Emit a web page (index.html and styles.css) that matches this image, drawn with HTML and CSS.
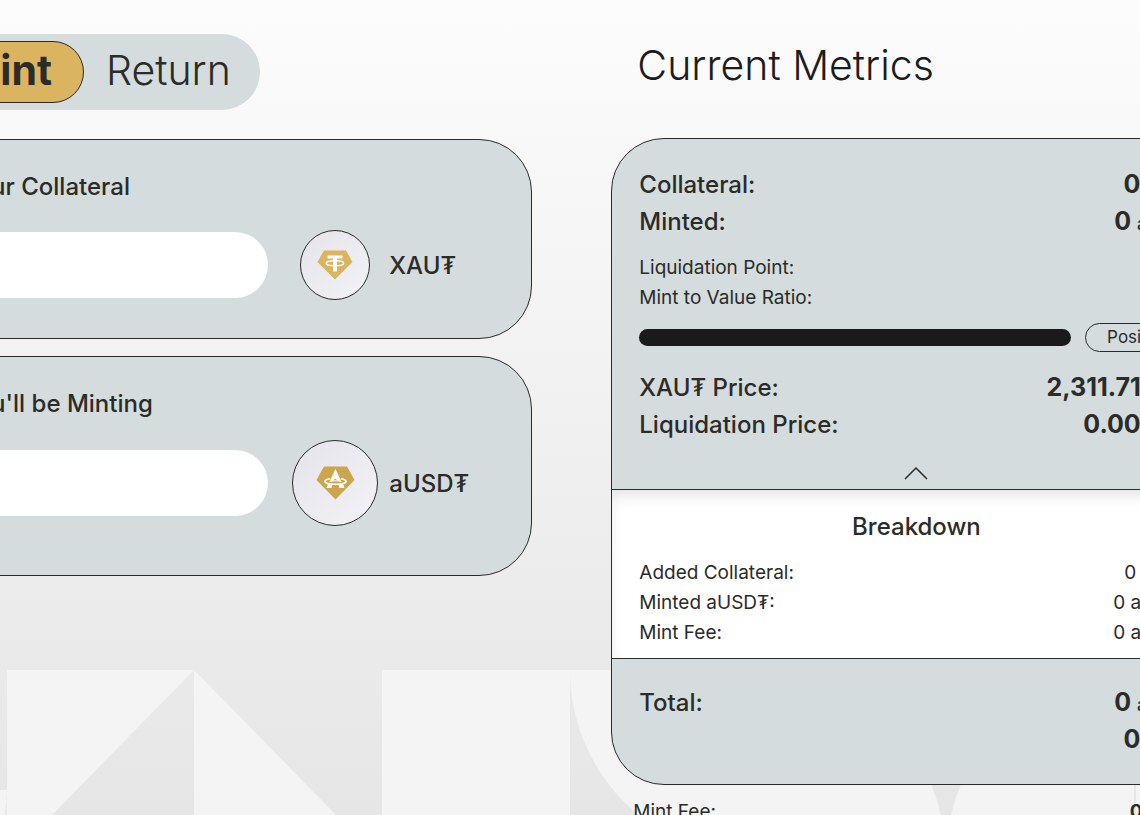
FILE: index.html
```html
<!DOCTYPE html>
<html lang="en">
<head>
<meta charset="utf-8">
<meta name="viewport" content="width=device-width, initial-scale=1">
<title>Mint</title>
<link rel="stylesheet" href="styles.css">
</head>
<body>
<div class="page">
  <svg class="pattern" viewBox="0 0 1140 145" aria-hidden="true">
    <path d="M0 120H7Q7 140 0 164Z"/>
    <path d="M7 0H194L52 145H7Z"/>
    <path d="M194 0L336 145H194Z"/>
    <path d="M382 0H570V145H382Z"/>
    <path d="M570 0H758V188A188 188 0 0 1 570 0Z"/>
    <path d="M758 0A188 188 0 0 1 946 188H758Z"/>
    <path d="M946 188A188 188 0 0 1 1134 0V188Z"/>
    <path d="M1136 0H1140V145H1136Z"/>
  </svg>
  <main class="layout">
    <section class="column">
      <header class="head">
        <div class="toggle">
          <button class="toggle-item active" type="button">Mint</button>
          <button class="toggle-item" type="button">Return</button>
        </div>
      </header>
      <div class="card">
        <label class="title" for="collateral">Your Collateral</label>
        <div class="entry">
          <input class="amount" id="collateral" type="text">
          <span class="slot"><span class="coin">
            <svg width="36" height="30" viewBox="0 0 36 30" aria-hidden="true">
              <path fill="#dab45e" d="M7 .5H29L35.500 12L18 29.500L.5 12Z"/>
              <path fill="#fff" d="M10.500 5.500H25.500V8.500H20V21.500H16V8.500H10.500Z"/>
              <ellipse cx="18" cy="13.200" rx="8.800" ry="2.600" fill="none" stroke="#fff" stroke-width="1.300"/>
            </svg>
          </span></span>
          <span class="token">XAU₮</span>
        </div>
      </div>
      <div class="card minting">
        <label class="title" for="minting">You'll be Minting</label>
        <div class="entry">
          <input class="amount" id="minting" type="text">
          <span class="slot"><span class="coin large">
            <svg width="39" height="34" viewBox="0 0 39 34" aria-hidden="true">
              <path fill="#cca54d" d="M8 .5H31L38.500 14L19.500 33.500L.5 14Z"/>
              <path fill="#fff" d="M19.500 3L25 14.500L22 15L19.500 12.500L17 15L14 14.500Z"/>
              <path fill="none" stroke="#fff" stroke-width="1.600" d="M14 12.800C6 14 7 18.300 19.500 18.300S33 14 25 12.800"/>
              <path fill="none" stroke="#fff" stroke-width="1.200" d="M13.500 15.500Q19.500 14 25.500 15.500"/>
              <path fill="#fff" d="M12 18L16.500 18.500L15.500 22H10.500ZM27 18L22.500 18.500L23.500 22H28.500Z"/>
            </svg>
          </span></span>
          <span class="token">aUSD₮</span>
        </div>
      </div>
    </section>
    <section class="column">
      <header class="head"><h1 class="heading">Current Metrics</h1></header>
      <div class="metrics">
        <div class="block summary">
          <div class="row"><span>Collateral:</span><span class="value">0 <small>XAU₮</small></span></div>
          <div class="row"><span>Minted:</span><span class="value">0 <small>aUSD₮</small></span></div>
          <div class="ratios">
            <div class="row minor">Liquidation Point:</div>
            <div class="row minor">Mint to Value Ratio:</div>
          </div>
          <div class="health">
            <div class="bar"></div>
            <span class="badge">Position</span>
          </div>
          <div class="row"><span>XAU₮ Price:</span><span class="value">2,311.71 <small>USD₮</small></span></div>
          <div class="row"><span>Liquidation Price:</span><span class="value">0.00 <small>USD₮</small></span></div>
          <button class="collapse" type="button" aria-label="Hide breakdown">
            <svg width="26" height="14" viewBox="0 0 26 14" aria-hidden="true"><path d="M2 13L13 2L24 13" fill="none" stroke="#2b2b28" stroke-width="1.500"/></svg>
          </button>
        </div>
        <div class="block breakdown">
          <h2 class="title">Breakdown</h2>
          <div class="row minor"><span>Added Collateral:</span><span>0 XAU₮</span></div>
          <div class="row minor"><span>Minted aUSD₮:</span><span>0 aUSD₮</span></div>
          <div class="row minor"><span>Mint Fee:</span><span>0 aUSD₮</span></div>
        </div>
        <div class="block total">
          <div class="row"><span>Total:</span><span class="value">0 <small>aUSD₮</small></span></div>
          <div class="row end"><span class="value">0 <small>XAU₮</small></span></div>
        </div>
      </div>
      <div class="row minor fee"><span>Mint Fee:</span><b>0 XAU₮</b></div>
    </section>
  </main>
</div>
</body>
</html>
```
FILE: styles.css
```css
* { box-sizing: border-box; }

body {
  margin: 0;
  color: #2b2b28;
  font: 500 24px/37px Inter, "Liberation Sans", sans-serif;
}

button, input { font: inherit; color: inherit; }

.page {
  position: relative;
  height: 100vh;
  overflow: hidden;
  background: linear-gradient(#fcfcfc, #f3f3f3 40%, #ebebeb 75%, #e6e6e6);
}

.pattern {
  position: absolute;
  left: 0;
  bottom: 0;
  width: 100%;
  fill: #f4f4f4;
}

.layout {
  position: relative;
  display: grid;
  grid-template-columns: minmax(0, 1fr) minmax(0, 1fr);
  gap: 79px;
  width: 114vw;
  margin-left: -78px;
  padding-top: 34px;
}

.head {
  display: flex;
  height: 104px;
  align-items: flex-start;
}

.toggle {
  display: flex;
  padding: 7px;
  border-radius: 38px;
  background: #d4dcdd;
}

.toggle-item {
  height: 62px;
  padding: 0 21px 4px;
  border: 1px solid transparent;
  border-radius: 31px;
  background: none;
  font-size: 41px;
  font-weight: 300;
}

.toggle-item.active {
  width: 155px;
  padding: 0 31px 4px;
  border-color: #2b2b28;
  background: #dab45e;
  font-weight: 700;
  text-align: right;
}

.heading {
  margin: 0;
  padding: 0 26px;
  color: #1c1c1c;
  font-size: 41px;
  font-weight: 300;
  line-height: 62px;
}

.card {
  margin-top: 1px;
  padding: 28px 28px 38px;
  border: 1px solid #2b2b28;
  border-radius: 53px;
  background: #d4dcdd;
}

.card .title { display: block; padding-left: 11px; }

.minting { margin-top: 17px; padding-bottom: 49px; }

.entry {
  display: flex;
  align-items: center;
  margin-top: 25px;
}

.minting .entry { margin-top: 18px; }

.amount {
  flex: 1;
  min-width: 0;
  height: 66px;
  padding: 0 28px;
  border: 0;
  border-radius: 33px;
  background: #fff;
}

.slot {
  display: flex;
  justify-content: center;
  width: 86px;
  margin: 0 11px 0 24px;
}

.coin {
  display: flex;
  align-items: center;
  justify-content: center;
  width: 70px;
  height: 70px;
  border: 1px solid #2b2b28;
  border-radius: 50%;
  background: linear-gradient(135deg, #e4e4ea, #f2f2f7);
}

.coin.large { width: 86px; height: 86px; }

.token { width: 114px; }

.metrics {
  overflow: hidden;
  border: 1px solid #2b2b28;
  border-radius: 53px;
  background: #d4dcdd;
}

.block { padding: 0 27px; }

.summary { padding-top: 27px; }

.row {
  display: flex;
  justify-content: space-between;
}

.row.end { justify-content: flex-end; }

.value { font-size: 25px; font-weight: 700; }

.value small { font-size: 17px; font-weight: 500; line-height: 1; }

.minor { font-size: 19px; font-weight: 400; line-height: 30px; }

.ratios { margin-top: 13px; }

.health {
  display: flex;
  align-items: center;
  gap: 14px;
  margin: 10px 0 17px;
}

.bar {
  flex: 1;
  height: 17px;
  border-radius: 9px;
  background: #1a1a1a;
}

.badge {
  width: 109px;
  border: 1px solid #2b2b28;
  border-radius: 15px;
  font-size: 17px;
  font-weight: 400;
  line-height: 27px;
  text-align: center;
}

.collapse {
  display: flex;
  justify-content: center;
  width: 100%;
  height: 46px;
  padding: 23px 0 0;
  border: 0;
  background: none;
}

.breakdown {
  padding-top: 18px;
  padding-bottom: 10px;
  border-top: 1px solid #2b2b28;
  border-bottom: 1px solid #2b2b28;
  background: #fff;
  box-shadow: inset 0 8px 16px -4px #00000020;
}

.breakdown .title {
  margin: 0 0 13px;
  font-size: inherit;
  font-weight: 500;
  text-align: center;
}

.total { padding-top: 25px; padding-bottom: 26px; }

.fee { padding: 12px 20px 0 22px; }
```
